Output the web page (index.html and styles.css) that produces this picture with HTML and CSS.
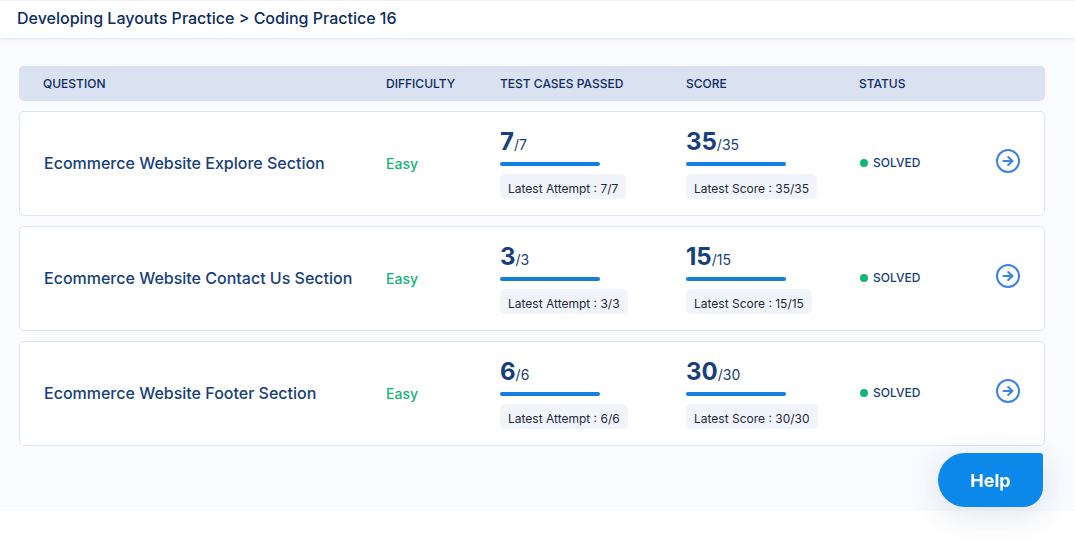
FILE: index.html
```
<!DOCTYPE html>
<html lang="en">
<head>
<meta charset="utf-8">
<meta name="viewport" content="width=device-width, initial-scale=1">
<title>Coding Practice 16</title>
<link rel="stylesheet" href="styles.css">
</head>
<body>
<header class="topbar">
  <h1 class="breadcrumb">Developing Layouts Practice &gt; Coding Practice 16</h1>
</header>
<main class="content">
  <table class="questions">
    <thead>
      <tr>
        <th class="col-question" scope="col">QUESTION</th>
        <th class="col-difficulty" scope="col">DIFFICULTY</th>
        <th class="col-tests" scope="col">TEST CASES PASSED</th>
        <th class="col-score" scope="col">SCORE</th>
        <th class="col-status" scope="col">STATUS</th>
        <td class="col-action"></td>
      </tr>
    </thead>
    <tbody>
      <tr>
        <td class="title">Ecommerce Website Explore Section</td>
        <td class="difficulty">Easy</td>
        <td><div class="result"><div class="count"><b>7</b>/7</div><div class="bar"></div><div class="chip">Latest Attempt : 7/7</div></div></td>
        <td><div class="result"><div class="count"><b>35</b>/35</div><div class="bar"></div><div class="chip">Latest Score : 35/35</div></div></td>
        <td><span class="status">SOLVED</span></td>
        <td class="action"><button class="open" type="button" aria-label="Open Ecommerce Website Explore Section"><svg class="arrow" viewBox="0 0 24 24"><circle cx="12" cy="12" r="11"/><path d="M7.500 12h9M12.200 8l4.300 4-4.300 4"/></svg></button></td>
      </tr>
      <tr>
        <td class="title">Ecommerce Website Contact Us Section</td>
        <td class="difficulty">Easy</td>
        <td><div class="result"><div class="count"><b>3</b>/3</div><div class="bar"></div><div class="chip">Latest Attempt : 3/3</div></div></td>
        <td><div class="result"><div class="count"><b>15</b>/15</div><div class="bar"></div><div class="chip">Latest Score : 15/15</div></div></td>
        <td><span class="status">SOLVED</span></td>
        <td class="action"><button class="open" type="button" aria-label="Open Ecommerce Website Contact Us Section"><svg class="arrow" viewBox="0 0 24 24"><circle cx="12" cy="12" r="11"/><path d="M7.500 12h9M12.200 8l4.300 4-4.300 4"/></svg></button></td>
      </tr>
      <tr>
        <td class="title">Ecommerce Website Footer Section</td>
        <td class="difficulty">Easy</td>
        <td><div class="result"><div class="count"><b>6</b>/6</div><div class="bar"></div><div class="chip">Latest Attempt : 6/6</div></div></td>
        <td><div class="result"><div class="count"><b>30</b>/30</div><div class="bar"></div><div class="chip">Latest Score : 30/30</div></div></td>
        <td><span class="status">SOLVED</span></td>
        <td class="action"><button class="open" type="button" aria-label="Open Ecommerce Website Footer Section"><svg class="arrow" viewBox="0 0 24 24"><circle cx="12" cy="12" r="11"/><path d="M7.500 12h9M12.200 8l4.300 4-4.300 4"/></svg></button></td>
      </tr>
    </tbody>
  </table>
</main>
<button class="help" type="button">Help</button>
</body>
</html>
```
FILE: styles.css
```
* {
  box-sizing: border-box;
}

body {
  margin: 0;
  background: #fff;
  color: #16407c;
  font-family: Inter, "Liberation Sans", sans-serif;
}

.topbar {
  position: relative;
  padding: 6px 17px 9px;
  background: #fff;
  border-top: 1px solid #f0f2f5;
  box-shadow: 0 1px 3px rgba(20, 40, 70, 0.12);
}

.breadcrumb {
  margin: 0;
  color: #0b2d64;
  font-size: 16px;
  font-weight: 500;
  line-height: 22px;
}

.content {
  padding: 18px 30px 55px 19px;
  background: #f9fbff;
}

.questions {
  width: 100%;
  table-layout: fixed;
  border-collapse: separate;
  border-spacing: 0 10px;
}

.questions th,
.questions td {
  padding: 0;
  text-align: left;
  vertical-align: middle;
}

.questions thead th,
.questions thead td {
  height: 35px;
  background: #dae1f0;
  color: #0b2d64;
  font-size: 12px;
  font-weight: 500;
}

.questions tr > :first-child {
  padding-left: 24px;
  border-radius: 5px 0 0 5px;
}

.questions tr > :last-child {
  padding-right: 24px;
  border-radius: 0 5px 5px 0;
}

.questions .col-difficulty {
  width: 114px;
}

.questions .col-tests {
  width: 186px;
}

.questions .col-score {
  width: 173px;
}

.questions .col-status {
  width: 126px;
}

.questions .col-action {
  width: 60px;
}

.questions tbody td {
  height: 105px;
  background: #fff;
  border: solid #d9e6f5;
  border-width: 1px 0;
}

.questions tbody td:first-child {
  border-left-width: 1px;
}

.questions tbody td:last-child {
  border-right-width: 1px;
}

.questions .title {
  padding-bottom: 2px;
  font-size: 16px;
  font-weight: 500;
}

.questions .difficulty {
  color: #16b377;
  font-size: 14px;
  font-weight: 500;
}

.result {
  display: flex;
  flex-direction: column;
  align-items: flex-start;
}

.count {
  font-size: 14px;
  line-height: 20px;
}

.count b {
  font-size: 24px;
  font-weight: 700;
  line-height: 28px;
}

.bar {
  width: 100px;
  height: 4px;
  margin: 6px 0 8px;
  border-radius: 2px;
  background: #157fe0;
}

.chip {
  padding: 5px 8px 0;
  border-radius: 5px;
  background: #f1f5fb;
  color: #1e293b;
  font-size: 12px;
  line-height: 20px;
}

.status {
  display: flex;
  align-items: center;
  gap: 5px;
  padding-bottom: 2px;
  font-size: 12px;
  font-weight: 500;
}

.status::before {
  content: "";
  width: 8px;
  height: 8px;
  margin-left: 1px;
  border-radius: 50%;
  background: #0db874;
}

.questions .action {
  padding-bottom: 5px;
}

.open {
  display: block;
  margin-left: auto;
  padding: 0;
  border: 0;
  background: none;
  cursor: pointer;
}

.arrow {
  display: block;
  width: 24px;
  height: 24px;
  fill: none;
  stroke: #3b82e6;
  stroke-width: 2;
  stroke-linecap: round;
  stroke-linejoin: round;
}

.help {
  position: fixed;
  right: 32px;
  bottom: 45px;
  width: 105px;
  height: 54px;
  border: 0;
  border-radius: 27px 3px 20px 27px;
  background: #0b88ea;
  box-shadow: 0 6px 32px rgba(50, 70, 120, 0.16);
  color: #fff;
  font: 700 18px Inter, "Liberation Sans", sans-serif;
  cursor: pointer;
}
```
